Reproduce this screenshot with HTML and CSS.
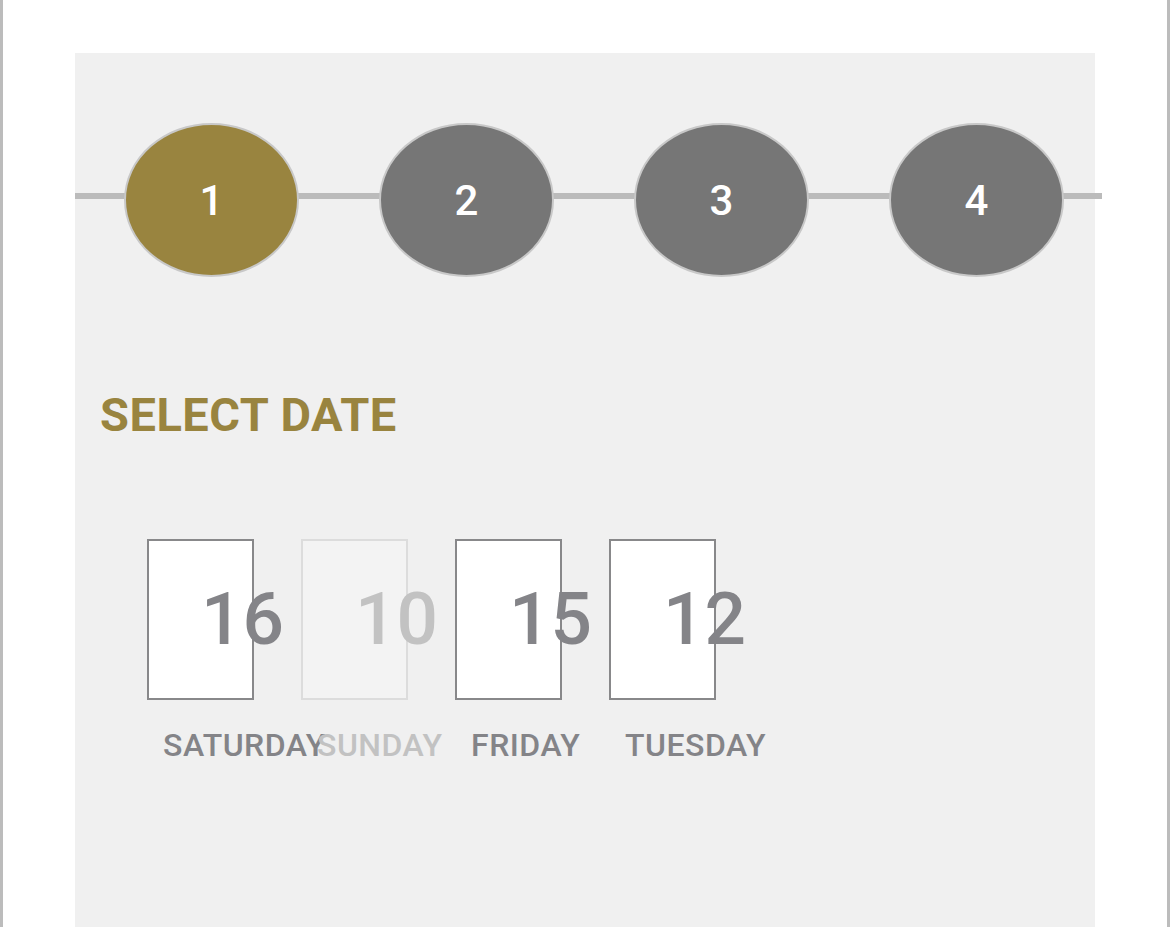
FILE: index.html
```html
<!DOCTYPE html>
<html lang="en">
<head>
<meta charset="utf-8">
<title>Select date</title>
<link rel="stylesheet" href="styles.css">
</head>
<body>
<div class="frame">
  <div class="panel">
    <div class="steps">
      <div class="step active">1</div>
      <div class="step">2</div>
      <div class="step">3</div>
      <div class="step">4</div>
    </div>
    <h2 class="heading">SELECT DATE</h2>
    <div class="dates">
      <div class="day">
        <div class="box"><span class="num">16</span></div>
        <div class="label">SATURDAY</div>
      </div>
      <div class="day disabled">
        <div class="box"><span class="num">10</span></div>
        <div class="label">SUNDAY</div>
      </div>
      <div class="day">
        <div class="box"><span class="num">15</span></div>
        <div class="label">FRIDAY</div>
      </div>
      <div class="day">
        <div class="box"><span class="num">12</span></div>
        <div class="label">TUESDAY</div>
      </div>
    </div>
  </div>
</div>
</body>
</html>
```

FILE: styles.css
```css
html, body {
  margin: 0;
  padding: 0;
  background: #ffffff;
  font-family: Roboto, "Liberation Sans", Arial, sans-serif;
}

.frame {
  box-sizing: border-box;
  width: 1170px;
  height: 927px;
  border-left: 3px solid #bcbcbc;
  border-right: 3px solid #bcbcbc;
  padding: 53px 0 0 72px;
  overflow: hidden;
}

.panel {
  width: 1020px;
  height: 874px;
  background: #f0f0f0;
  box-sizing: border-box;
  padding-left: 25px;
}

.steps {
  position: relative;
  display: flex;
  gap: 80px;
  padding: 70px 0 0 24px;
}

.steps::before {
  content: "";
  position: absolute;
  left: -25px;
  top: 140px;
  width: 1027px;
  height: 6px;
  background: #bbbbbb;
}

.step {
  position: relative;
  box-sizing: border-box;
  width: 175px;
  height: 154px;
  border: 2px solid #c8c8c8;
  border-radius: 50%;
  background: #767676;
  color: #ffffff;
  font-size: 42px;
  font-weight: 500;
  display: flex;
  align-items: center;
  justify-content: center;
}

.step.active {
  background: #99843f;
}

.heading {
  margin: 0;
  padding: 111px 0 0 0;
  font-size: 47px;
  line-height: 54px;
  letter-spacing: 0.5px;
  font-weight: 700;
  color: #99843f;
}

.dates {
  display: flex;
  gap: 47px;
  margin: 97px 0 0 47px;
}

.day {
  width: 107px;
  display: flex;
  flex-direction: column;
}

.box {
  box-sizing: border-box;
  width: 107px;
  height: 161px;
  border: 2px solid #88888a;
  background: #ffffff;
  padding: 35px 0 0 52px;
  white-space: nowrap;
}

.num {
  font-size: 73px;
  line-height: 86px;
  font-weight: 500;
  color: #848488;
}

.label {
  margin-top: 26px;
  padding-left: 16px;
  font-size: 32px;
  line-height: 38px;
  letter-spacing: 0.5px;
  font-weight: 500;
  color: #848488;
  white-space: nowrap;
}

.day.disabled .box {
  border-color: #dcdcdc;
  background: #f3f3f3;
}

.day.disabled .num,
.day.disabled .label {
  color: #c2c2c2;
}
```
